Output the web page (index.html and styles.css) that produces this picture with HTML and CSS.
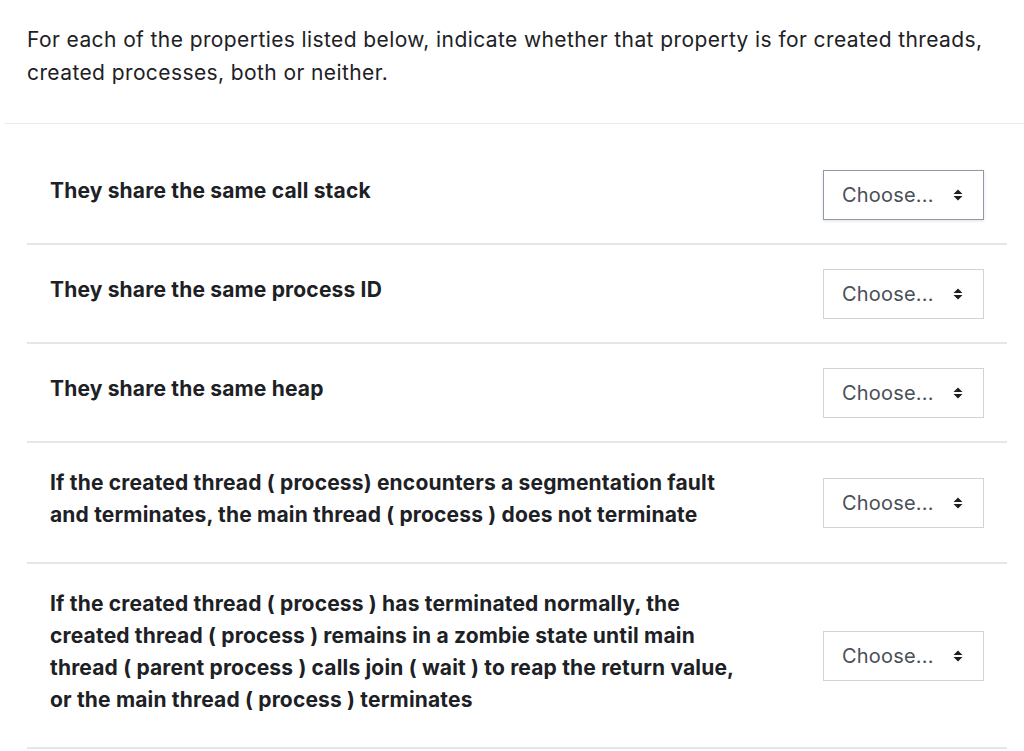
FILE: index.html
```html
<!DOCTYPE html>
<html>
<head>
<meta charset="utf-8">
<link rel="stylesheet" href="styles.css">
</head>
<body>
<div class="page">
  <div class="intro">
    <p>For each of the properties listed below, indicate whether that property is for created threads, created processes, both or neither.</p>
  </div>
  <div class="questions">
    <div class="row">
      <div class="label"><p>They share the same call stack</p></div>
      <div class="select focused"><span>Choose...</span><svg class="arrows" width="10" height="12" viewBox="0 0 10 12"><path d="M5 0.5 L9.5 5 H0.5 Z M0.5 7 H9.5 L5 11.5 Z" fill="#1d2125"/></svg></div>
    </div>
    <div class="row">
      <div class="label"><p>They share the same process ID</p></div>
      <div class="select"><span>Choose...</span><svg class="arrows" width="10" height="12" viewBox="0 0 10 12"><path d="M5 0.5 L9.5 5 H0.5 Z M0.5 7 H9.5 L5 11.5 Z" fill="#1d2125"/></svg></div>
    </div>
    <div class="row">
      <div class="label"><p>They share the same heap</p></div>
      <div class="select"><span>Choose...</span><svg class="arrows" width="10" height="12" viewBox="0 0 10 12"><path d="M5 0.5 L9.5 5 H0.5 Z M0.5 7 H9.5 L5 11.5 Z" fill="#1d2125"/></svg></div>
    </div>
    <div class="row">
      <div class="label"><p>If the created thread ( process) encounters a segmentation fault and terminates, the main thread ( process ) does not terminate</p></div>
      <div class="select"><span>Choose...</span><svg class="arrows" width="10" height="12" viewBox="0 0 10 12"><path d="M5 0.5 L9.5 5 H0.5 Z M0.5 7 H9.5 L5 11.5 Z" fill="#1d2125"/></svg></div>
    </div>
    <div class="row">
      <div class="label"><p>If the created thread ( process ) has terminated normally, the created thread ( process ) remains in a zombie state until main thread ( parent process ) calls join ( wait ) to reap the return value, or the main thread ( process ) terminates</p></div>
      <div class="select"><span>Choose...</span><svg class="arrows" width="10" height="12" viewBox="0 0 10 12"><path d="M5 0.5 L9.5 5 H0.5 Z M0.5 7 H9.5 L5 11.5 Z" fill="#1d2125"/></svg></div>
    </div>
  </div>
</div>
</body>
</html>
```

FILE: styles.css
```css
html, body {
  margin: 0;
  padding: 0;
  background: #ffffff;
}

body {
  font-family: Inter, "Liberation Sans", sans-serif;
  color: #1d2125;
  font-size: 21px;
}

p {
  margin: 0;
}

.intro {
  margin-left: 4px;
  padding: 24px 0 34px 23px;
  border-bottom: 1px solid #e9ecef;
  line-height: 32.5px;
  letter-spacing: 0.4px;
}

.intro p {
  max-width: 990px;
}

.questions {
  margin: 22px 17px 0 27px;
}

.row {
  display: flex;
  align-items: center;
  justify-content: space-between;
  padding: 24px 0 23px 23px;
  border-bottom: 2px solid #e3e6ea;
}

.label {
  width: 700px;
  font-weight: 700;
  line-height: 32px;
  letter-spacing: 0.17px;
  padding-bottom: 8px;
}

.select {
  box-sizing: border-box;
  width: 161px;
  height: 50px;
  margin-right: 23px;
  border: 1px solid #ced4da;
  display: flex;
  align-items: center;
  justify-content: space-between;
  padding: 0 20px 0 18px;
  color: #495057;
  font-size: 20px;
  letter-spacing: 0.2px;
  background: #fff;
}

.select.focused {
  border-color: #8f9aa8;
  box-shadow: 0 1px 3px rgba(0, 0, 0, 0.12);
}

.arrows {
  display: block;
}
```
